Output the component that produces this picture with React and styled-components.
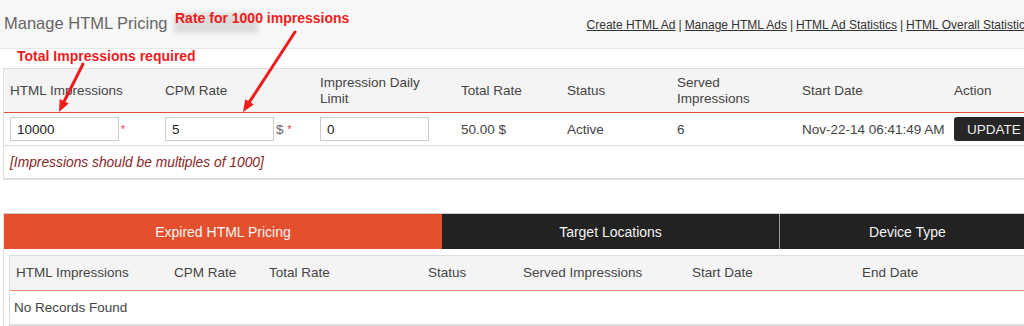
import React from 'react'
import styled, { createGlobalStyle } from 'styled-components'

const GlobalStyle = createGlobalStyle`
  body {
    margin: 0;
    background: #fff;
    font-family: "Liberation Sans", Arial, sans-serif;
    color: #444;
    overflow: hidden;
  }
`

const Page = styled.div`
  position: relative;
  width: 1040px;
`

const TopBar = styled.div`
  height: 49px;
  background-color: #f7f7f7;
  border-bottom: 1px solid #e8e8e8;
  display: flex;
  align-items: center;
  justify-content: space-between;
  padding: 0 6px 2px 4px;
  box-sizing: border-box;
`

const Title = styled.h1`
  margin: 0;
  font-size: 16.5px;
  font-weight: normal;
  color: #666;
  display: flex;
  align-items: center;
`

const Blurred = styled.span`
  display: inline-block;
  width: 84px;
  height: 20px;
  margin-left: 6px;
  background: #dcdcdc;
  border-radius: 3px;
  filter: blur(2px);
`

const Links = styled.div`
  font-size: 12px;
  color: #333;
  padding-top: 4px;
  margin-right: 3px;

  a {
    color: #333;
    text-decoration: underline;
  }

  span {
    margin: 0 3px;
  }
`

const TableBox = styled.div`
  margin: 19px 0 0 3px;
  width: 1031px;
  border-top: 1px solid #ddd;
  border-left: 1px solid #ddd;
`

const Table = styled.table`
  width: 100%;
  border-collapse: collapse;
  table-layout: fixed;
  font-size: 13.5px;

  th {
    background: #f4f4f4;
    font-weight: normal;
    text-align: left;
    padding: 0 6px;
    color: #444;
    line-height: 16px;
    height: ${p => p.headHeight}px;
    border-bottom: 1px solid ${p => p.accent};
  }

  td {
    padding: 0 6px;
    color: #444;
    height: ${p => p.rowHeight}px;
    border-bottom: 1px solid #ddd;
    white-space: nowrap;
  }
`

const Col = styled.col`
  width: ${p => p.w}px;
`

const Field = styled.input`
  width: 109px;
  height: 24px;
  box-sizing: border-box;
  border: 1px solid #ccc;
  padding: 0 6px;
  font-family: inherit;
  font-size: 13.5px;
  color: #222;
  vertical-align: middle;
`

const Required = styled.span`
  color: #e33;
  font-size: 10px;
  vertical-align: middle;
  margin-left: ${p => p.gap || 2}px;
`

const Dollar = styled.span`
  color: #666;
  margin-left: 2px;
  vertical-align: middle;
`

const UpdateButton = styled.button`
  background: #262626;
  color: #eee;
  border: none;
  border-radius: 3px;
  height: 24px;
  width: 80px;
  padding: 0 0 0 13px;
  text-align: left;
  font-family: inherit;
  font-size: 13.5px;
`

const Hint = styled.td`
  && {
    height: 32px;
    border-bottom: 2px solid #ddd;
    color: #8b2525;
    font-style: italic;
    font-size: 13.8px;
  }
`

const Empty = styled.td`
  && {
    padding-left: 4px;
  }
`

const TabSection = styled.div`
  margin: 33px 0 0 3px;
  width: 1031px;
  border-left: 1px solid #ddd;
  border-top: 1px solid #ccc;
`

const Tabs = styled.div`
  display: flex;
  height: 35px;
`

const Tab = styled.div`
  flex: ${p => p.grow ? '1' : `0 0 ${p.width}px`};
  background: ${p => p.active ? '#e4502d' : '#222'};
  color: #f4f4f4;
  font-size: 14px;
  display: flex;
  align-items: center;
  justify-content: center;
  border-left: ${p => p.divider ? '1px solid #999' : 'none'};
`

const Panel = styled.div`
  padding: 6px 0 0 5px;
`

const InnerBox = styled.div`
  border: 1px solid #ddd;
  border-right: none;
`

const Annotations = styled.div`
  position: absolute;
  inset: 0;
  pointer-events: none;
`

const Note = styled.div`
  position: absolute;
  left: ${p => p.x}px;
  top: ${p => p.y}px;
  color: #ee1c1c;
  font-weight: bold;
  font-size: 14px;
  white-space: nowrap;
`

const Arrows = styled.svg`
  position: absolute;
  left: 0;
  top: 0;
`

const App = () => {
  return (
    <Page>
      <GlobalStyle />
      <TopBar>
        <Title>Manage HTML Pricing<Blurred /></Title>
        <Links>
          <a href="#">Create HTML Ad</a><span>|</span>
          <a href="#">Manage HTML Ads</a><span>|</span>
          <a href="#">HTML Ad Statistics</a><span>|</span>
          <a href="#">HTML Overall Statistics</a>
        </Links>
      </TopBar>

      <TableBox>
        <Table headHeight={43} rowHeight={32} accent="#e4502d">
          <colgroup>
            <Col w={155} />
            <Col w={155} />
            <Col w={141} />
            <Col w={106} />
            <Col w={110} />
            <Col w={125} />
            <Col w={152} />
            <col />
          </colgroup>
          <thead>
            <tr>
              <th>HTML Impressions</th>
              <th>CPM Rate</th>
              <th>Impression Daily<br />Limit</th>
              <th>Total Rate</th>
              <th>Status</th>
              <th>Served<br />Impressions</th>
              <th>Start Date</th>
              <th>Action</th>
            </tr>
          </thead>
          <tbody>
            <tr>
              <td><Field defaultValue="10000" /><Required>*</Required></td>
              <td><Field defaultValue="5" /><Dollar>$</Dollar><Required gap={4}>*</Required></td>
              <td><Field defaultValue="0" /></td>
              <td>50.00 $</td>
              <td>Active</td>
              <td>6</td>
              <td>Nov-22-14 06:41:49 AM</td>
              <td><UpdateButton>UPDATE</UpdateButton></td>
            </tr>
            <tr>
              <Hint colSpan={8}>[Impressions should be multiples of 1000]</Hint>
            </tr>
          </tbody>
        </Table>
      </TableBox>

      <TabSection>
        <Tabs>
          <Tab active width={438}>Expired HTML Pricing</Tab>
          <Tab width={337}>Target Locations</Tab>
          <Tab grow divider>Device Type</Tab>
        </Tabs>
        <Panel>
          <InnerBox>
            <Table headHeight={34} rowHeight={33} accent="#f08a70">
              <colgroup>
                <Col w={158} />
                <Col w={95} />
                <Col w={159} />
                <Col w={95} />
                <Col w={169} />
                <Col w={170} />
                <col />
              </colgroup>
              <thead>
                <tr>
                  <th>HTML Impressions</th>
                  <th>CPM Rate</th>
                  <th>Total Rate</th>
                  <th>Status</th>
                  <th>Served Impressions</th>
                  <th>Start Date</th>
                  <th>End Date</th>
                </tr>
              </thead>
              <tbody>
                <tr>
                  <Empty colSpan={7}>No Records Found</Empty>
                </tr>
              </tbody>
            </Table>
          </InnerBox>
        </Panel>
      </TabSection>

      <Annotations>
        <Note x={175} y={10}>Rate for 1000 impressions</Note>
        <Note x={17} y={48}>Total Impressions required</Note>
        <Arrows width="400" height="130" viewBox="0 0 400 130">
          <g stroke="#ee1c1c" strokeWidth="3" strokeLinecap="round">
            <line x1="83" y1="64" x2="64.2" y2="101.2" />
            <line x1="295" y1="32" x2="249.5" y2="101.9" />
          </g>
          <g fill="#ee1c1c">
            <polygon points="59,112 68.7,103.4 59.7,99" />
            <polygon points="243,112 253.7,104.6 245.3,99.2" />
          </g>
        </Arrows>
      </Annotations>
    </Page>
  )
}

export default App
